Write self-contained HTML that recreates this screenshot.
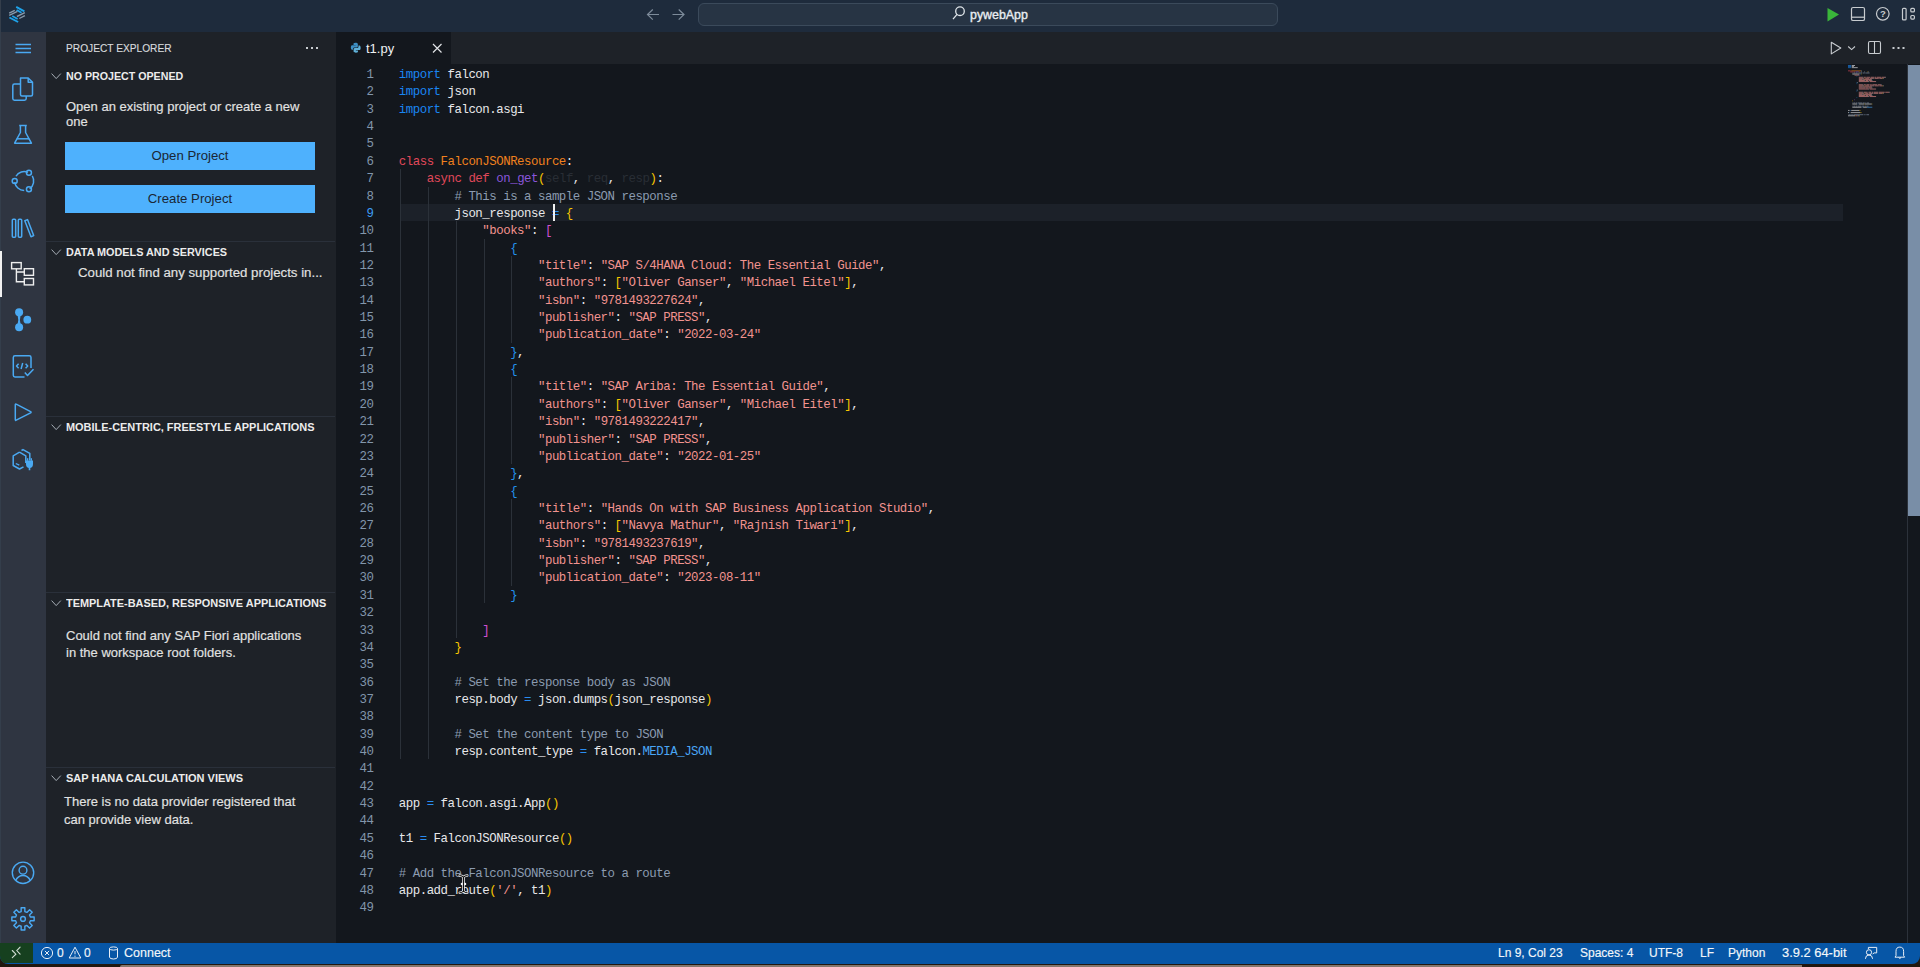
<!DOCTYPE html>
<html><head><meta charset="utf-8">
<style>
*{box-sizing:border-box}
html,body{margin:0;padding:0}
body{width:1920px;height:967px;overflow:hidden;position:relative;background:#22170f;font-family:"Liberation Sans",sans-serif;color:#e6e6e6}
.a{position:absolute}
#title{left:0;top:0;width:1920px;height:32px;background:#1e2b3c}
#act{left:0;top:32px;width:46px;height:911px;background:#2f3541;border-left:1px solid #3b424d}
#side{left:46px;top:32px;width:290px;height:911px;background:#1e2228}
#tabs{left:336px;top:32px;width:1584px;height:32px;background:#1e2228}
#editor{left:336px;top:64px;width:1584px;height:879px;background:#13171d;overflow:hidden}
#status{left:0;top:943px;width:1920px;height:21px;background:#0756a6;border-bottom-left-radius:8px;border-bottom-right-radius:8px;overflow:hidden}
#bottom{left:120px;top:965px;width:1682px;height:2px;background:#85776d;border-top-left-radius:6px}
svg{position:absolute;overflow:visible}
.ln{position:absolute;left:0;width:37.52px;text-align:right;font-family:"Liberation Mono",monospace;font-size:12.40px;letter-spacing:-0.477px;color:#8296ab;white-space:pre}
.cl{position:absolute;font-family:"Liberation Mono",monospace;font-size:12.40px;letter-spacing:-0.477px;white-space:pre}
.g{position:absolute;width:1px;background:#2b3139}
.hd{position:absolute;left:66px;font-weight:bold;font-size:11.4px;color:#ececec;white-space:nowrap;transform-origin:0 0}
.chev{position:absolute;left:51px}
.sep{position:absolute;left:46px;width:289px;height:1px;background:#2a303a}
.txt{position:absolute;font-size:13px;color:#e2e2e2;white-space:nowrap;line-height:17.3px;-webkit-text-stroke:0.15px #e2e2e2}
.btn{position:absolute;left:65px;width:250px;height:28px;background:#4eb1fd;color:#1a2634;font-size:13.2px;text-align:center;line-height:28px}
.st{position:absolute;top:0;height:20px;line-height:20px;font-size:12px;color:#f2f6fa;white-space:nowrap;-webkit-text-stroke:0.15px #f2f6fa}
.kw{color:#1a86f2}
.red{color:#e0485a}
.cls{color:#f0811e}
.fn{color:#8a56da}
.par{color:#f7c500}
.mag{color:#d050d0}
.brc{color:#2392ec}
.str{color:#f2938f}
.com{color:#8b9bb0}
.id{color:#e8e8ea}
.op{color:#2a8cf0}
.const{color:#4aa6f5}
.dim{color:#292e35}
.punc{color:#e8e8ea}
</style></head><body>
<div id="bottom" class="a"></div>
<div id="title" class="a"></div>
<div id="act" class="a"></div>
<div id="side" class="a"></div>
<div id="tabs" class="a"></div>
<div class="a" style="left:0;top:0;width:1920px;height:32px"><div class="a" style="left:0;top:0;width:1px;height:943px;background:#343e4b"></div><svg width="30" height="30" style="left:0;top:0"><g stroke-linecap="butt"><path d="M16.2 6.9 L24.4 11.4" stroke="#1ea3ea" stroke-width="1.9"/><path d="M16.6 10 L21.6 12.8" stroke="#1ea3ea" stroke-width="1.7"/><path d="M9.2 13.2 L14.8 10.3" stroke="#8799ab" stroke-width="1.4"/><path d="M9.2 15.3 L17.4 11.4" stroke="#8799ab" stroke-width="1.4"/><path d="M16.9 16.5 L24.9 12.6" stroke="#8799ab" stroke-width="1.4"/><path d="M19.3 18.5 L24.9 15.6" stroke="#8799ab" stroke-width="1.4"/><path d="M9.4 17.5 L18.1 22" stroke="#1ea3ea" stroke-width="1.9"/><path d="M12.3 16 L17.6 18.9" stroke="#1ea3ea" stroke-width="1.7"/></g></svg><svg width="40" height="32" style="left:640px;top:0"><g fill="none" stroke="#7d8b9a" stroke-width="1.2"><path d="M19 14.5 H7.5 M12.8 9.5 L7.5 14.5 L12.8 19.6"/><path d="M32.5 14.5 H44 M38.7 9.5 L44 14.5 L38.7 19.6"/></g></svg><div class="a" style="left:698px;top:3px;width:580px;height:23px;background:#273444;border:1px solid #3b4a5b;border-radius:6px"></div><svg width="16" height="16" style="left:950px;top:5px"><g fill="none" stroke="#dfe5ea" stroke-width="1.3"><circle cx="10" cy="6.2" r="4.3"/><path d="M7 9.4 L3 14.2"/></g></svg><div class="a" style="left:970px;top:7.5px;font-size:12.4px;color:#e9edf1;-webkit-text-stroke:0.35px #e9edf1">pywebApp</div><svg width="100" height="32" style="left:1820px;top:0"><path d="M7.5 8 L19 14.6 L7.5 21.5 Z" fill="#3ab53a"/><g fill="none" stroke="#c8ccd0" stroke-width="1.2"><rect x="31.5" y="7.5" width="13" height="13" rx="1.6"/><path d="M31.5 17.2 H44.5"/><circle cx="62.8" cy="13.8" r="6.3"/><rect x="82.5" y="8.3" width="3.6" height="11.6" rx="1"/><rect x="90.8" y="8.3" width="3.6" height="3.6" rx="1"/><rect x="90.8" y="15.5" width="3.6" height="3.6" rx="1"/></g><text x="62.8" y="17.4" font-size="9.5" font-weight="bold" fill="#c8ccd0" text-anchor="middle" font-family="Liberation Sans">?</text></svg></div>
<div class="a" style="left:336px;top:32px;width:115px;height:32px;background:#13171d"></div><svg width="14" height="14" style="left:350px;top:42px"><g transform="scale(0.82)"><path d="M6.8 1 C4.2 1 4.3 2.2 4.3 2.2 V3.6 H6.9 V4.1 H2.9 C2.9 4.1 1 3.9 1 6.8 C1 9.7 2.7 9.6 2.7 9.6 H3.7 V8.2 C3.7 8.2 3.6 6.6 5.3 6.6 H8 C8 6.6 9.6 6.6 9.6 5.1 V2.6 C9.6 2.6 9.8 1 6.8 1 Z" fill="#3d8fc4"/><path d="M7.2 13 C9.8 13 9.7 11.8 9.7 11.8 V10.4 H7.1 V9.9 H11.1 C11.1 9.9 13 10.1 13 7.2 C13 4.3 11.3 4.4 11.3 4.4 H10.3 V5.8 C10.3 5.8 10.4 7.4 8.7 7.4 H6 C6 7.4 4.4 7.4 4.4 8.9 V11.4 C4.4 11.4 4.2 13 7.2 13 Z" fill="#5fb0d8"/></g></svg><div class="a" style="left:366px;top:41px;font-size:13px;color:#eef0f2">t1.py</div><svg width="12" height="12" style="left:432px;top:43px"><path d="M1 1 L9.5 9.5 M9.5 1 L1 9.5" stroke="#e0e3e6" stroke-width="1.2"/></svg><svg width="90" height="32" style="left:1825px;top:32px"><g fill="none" stroke="#c8ccd0" stroke-width="1.1"><path d="M6.3 10.3 L15.8 16 L6.3 21.9 Z" stroke-linejoin="round"/><path d="M23.2 14.5 L26.6 17.6 L30 14.5"/><rect x="43.5" y="9.5" width="12" height="12" rx="1.4"/><path d="M49.5 9.5 V21.5"/></g><g fill="#c8ccd0"><rect x="67.5" y="15" width="2" height="2"/><rect x="72.5" y="15" width="2" height="2"/><rect x="77.5" y="15" width="2" height="2"/></g></svg>
<div class="a" style="left:0;top:251px;width:2px;height:46px;background:#f2f2f2"></div><svg width="46" height="911" style="left:0;top:32px"><g fill="none" stroke="#4aa9f2" stroke-width="1.5" stroke-linejoin="round"><path d="M15.5 12.5 H31 M15.5 16.5 H31 M15.5 20.5 H31" stroke-width="1.5"/><path d="M20.5 46 H28.2 L32.5 50.3 V62.5 Q32.5 64 31 64 H22 Q20.5 64 20.5 62.5 Z"/><path d="M28.2 46 V50.3 H32.5"/><path d="M20.5 52 H14.5 Q12.8 52 12.8 53.7 V66.5 Q12.8 68.2 14.5 68.2 H24.5 Q26.2 68.2 26.2 66.5 V64"/><path d="M19.2 93.5 H26.8 M20.4 93.5 V100.5 L14.6 111.2 H31.4 L25.6 100.5 V93.5"/><path d="M16.8 106.8 H29.2"/><path d="M15.97 144.25 A9.50 9.50 0 0 1 28.06 140.32 M32.26 143.97 A9.50 9.50 0 0 1 29.65 156.78 M24.20 158.50 A9.50 9.50 0 0 1 14.75 149.99"/><circle cx="28.95" cy="140.77" r="2.5"/><circle cx="14.70" cy="149.00" r="2.5"/><circle cx="28.95" cy="157.23" r="2.5"/><rect x="12.3" y="187.3" width="3.4" height="18" rx="1"/><rect x="18.3" y="187.3" width="3.4" height="18" rx="1"/><path d="M24.8 188.8 L27.5 187.6 L33.7 203.6 L31 204.8 Z"/></g><g fill="none" stroke="#eeeeee" stroke-width="1.4"><rect x="11.6" y="230.6" width="9.6" height="6.2"/><rect x="24.3" y="236.7" width="9.2" height="6.6"/><rect x="24.3" y="246.5" width="9.2" height="6.4"/><path d="M16.4 236.8 V249.7 H24.3 M16.4 240 H24.3"/></g><g fill="#4aa9f2"><circle cx="19.1" cy="280.2" r="4"/><circle cx="19.1" cy="295.3" r="4"/><circle cx="27.3" cy="287.7" r="3.9"/><path d="M17.4 282 Q19.1 287.7 17.4 293.5 H20.8 Q19.1 287.7 20.8 282 Z"/></g><g fill="none" stroke="#4aa9f2" stroke-width="1.5" stroke-linejoin="round"><path d="M24.5 345 H15 Q13.3 345 13.3 343.3 V325.5 Q13.3 323.8 15 323.8 H29.3 Q31 323.8 31 325.5 V336"/><path d="M24.8 340.6 L27.5 343.5 L33.5 337.2"/><path d="M18.6 331.8 L16.5 334 L18.6 336.2 M25.6 331.8 L27.7 334 L25.6 336.2 M22.7 331 L21.1 337"/><path d="M16.2 372.2 Q15.3 371.6 15.3 372.8 V387.6 Q15.3 388.8 16.2 388.2 L30.6 380.9 Q31.5 380.3 30.6 379.6 Z"/><path d="M19.5 420.2 L25.8 423.8 V431 M19.5 420.2 L13.2 423.8 V433.5 L19.5 437 L23.5 434.8"/><path d="M21.5 418.5 L23 417.6 L29.8 421.4 V428.5"/><path d="M15.8 431.5 L19.3 433.2" stroke-width="1.3"/></g><g fill="#4aa9f2"><path d="M26 428.6 H33 V432 Q33 435.5 30.3 436 V438.2 H28.7 V436 Q26 435.5 26 432 Z"/><rect x="27" y="426.2" width="1.3" height="2.6"/><rect x="30.7" y="426.2" width="1.3" height="2.6"/></g><g fill="none" stroke="#4aa9f2" stroke-width="1.4"><circle cx="23" cy="840.8" r="10.7"/><circle cx="23" cy="838.2" r="3.9"/><path d="M15.6 848.6 Q18 843.5 23 843.5 Q28 843.5 30.4 848.6"/></g><g fill="none" stroke="#4aa9f2" stroke-width="1.4" stroke-linejoin="round"><path d="M21.16 879.53 L21.13 875.75 L24.87 875.75 L24.84 879.53 L26.91 880.39 L29.56 877.70 L32.20 880.34 L29.51 882.99 L30.37 885.06 L34.15 885.03 L34.15 888.77 L30.37 888.74 L29.51 890.81 L32.20 893.46 L29.56 896.10 L26.91 893.41 L24.84 894.27 L24.87 898.05 L21.13 898.05 L21.16 894.27 L19.09 893.41 L16.44 896.10 L13.80 893.46 L16.49 890.81 L15.63 888.74 L11.85 888.77 L11.85 885.03 L15.63 885.06 L16.49 882.99 L13.80 880.34 L16.44 877.70 L19.09 880.39 Z"/><circle cx="23" cy="886.9" r="2.4"/></g></svg>
<div class="a" style="left:66px;top:40.55px;font-size:11.8px;color:#d8dadd;-webkit-text-stroke:0.15px #d8dadd;white-space:nowrap;transform-origin:0 0;transform:scaleX(0.8625)">PROJECT EXPLORER</div><svg width="16" height="4" style="left:306px;top:46px"><g fill="#c8ccd0"><rect x="0" y="1" width="2" height="2"/><rect x="5" y="1" width="2" height="2"/><rect x="10" y="1" width="2" height="2"/></g></svg><svg width="12" height="8" style="left:51px;top:73.3px"><path d="M0.6 0.6 L5.2 5.6 L9.8 0.6" fill="none" stroke="#a6adb5" stroke-width="1"/></svg><div class="hd" style="top:69.68px;transform:scaleX(0.9352)">NO PROJECT OPENED</div><div class="txt" style="left:66px;top:98.75px;line-height:15.5px">Open an existing project or create a new<br>one</div><div class="btn" style="top:142px">Open Project</div><div class="btn" style="top:185px">Create Project</div><div class="sep" style="top:241.3px"></div><svg width="12" height="8" style="left:51px;top:248.9px"><path d="M0.6 0.6 L5.2 5.6 L9.8 0.6" fill="none" stroke="#a6adb5" stroke-width="1"/></svg><div class="hd" style="top:246.18px;transform:scaleX(0.9510)">DATA MODELS AND SERVICES</div><div class="sep" style="top:416.0px"></div><svg width="12" height="8" style="left:51px;top:423.6px"><path d="M0.6 0.6 L5.2 5.6 L9.8 0.6" fill="none" stroke="#a6adb5" stroke-width="1"/></svg><div class="hd" style="top:420.88px;transform:scaleX(0.9601)">MOBILE-CENTRIC, FREESTYLE APPLICATIONS</div><div class="sep" style="top:592.1px"></div><svg width="12" height="8" style="left:51px;top:599.7px"><path d="M0.6 0.6 L5.2 5.6 L9.8 0.6" fill="none" stroke="#a6adb5" stroke-width="1"/></svg><div class="hd" style="top:596.98px;transform:scaleX(0.9595)">TEMPLATE-BASED, RESPONSIVE APPLICATIONS</div><div class="sep" style="top:767.1px"></div><svg width="12" height="8" style="left:51px;top:774.7px"><path d="M0.6 0.6 L5.2 5.6 L9.8 0.6" fill="none" stroke="#a6adb5" stroke-width="1"/></svg><div class="hd" style="top:771.98px;transform:scaleX(0.9656)">SAP HANA CALCULATION VIEWS</div><div class="txt" style="left:78px;top:263.80px;font-size:13.25px">Could not find any supported projects in...</div><div class="txt" style="left:66px;top:626.55px">Could not find any SAP Fiori applications<br>in the workspace root folders.</div><div class="txt" style="left:64px;top:793.25px">There is no data provider registered that<br>can provide view data.</div>
<div id="editor" class="a">
<div class="a" style="left:64.00px;top:139.88px;width:1443.00px;height:17.36px;background:#1c2129"></div>
<div class="g" style="left:64.00px;top:105.16px;height:590.24px"></div>
<div class="g" style="left:91.85px;top:122.52px;height:572.88px"></div>
<div class="g" style="left:119.70px;top:157.24px;height:416.64px"></div>
<div class="g" style="left:147.55px;top:174.60px;height:364.56px"></div>
<div class="g" style="left:175.40px;top:191.96px;height:86.80px"></div>
<div class="g" style="left:175.40px;top:313.48px;height:86.80px"></div>
<div class="g" style="left:175.40px;top:435.00px;height:86.80px"></div>
<div class="ln" style="top:3.00px;height:17.36px;line-height:17.36px;color:#8296ab">1</div>
<div class="cl" style="left:62.80px;top:3.00px;line-height:17.36px"><span class="kw">import</span><span class="id"> falcon</span></div>
<div class="ln" style="top:20.36px;height:17.36px;line-height:17.36px;color:#8296ab">2</div>
<div class="cl" style="left:62.80px;top:20.36px;line-height:17.36px"><span class="kw">import</span><span class="id"> json</span></div>
<div class="ln" style="top:37.72px;height:17.36px;line-height:17.36px;color:#8296ab">3</div>
<div class="cl" style="left:62.80px;top:37.72px;line-height:17.36px"><span class="kw">import</span><span class="id"> falcon.asgi</span></div>
<div class="ln" style="top:55.08px;height:17.36px;line-height:17.36px;color:#8296ab">4</div>
<div class="ln" style="top:72.44px;height:17.36px;line-height:17.36px;color:#8296ab">5</div>
<div class="ln" style="top:89.80px;height:17.36px;line-height:17.36px;color:#8296ab">6</div>
<div class="cl" style="left:62.80px;top:89.80px;line-height:17.36px"><span class="red">class</span><span class="id"> </span><span class="cls">FalconJSONResource</span><span class="punc">:</span></div>
<div class="ln" style="top:107.16px;height:17.36px;line-height:17.36px;color:#8296ab">7</div>
<div class="cl" style="left:62.80px;top:107.16px;line-height:17.36px">    <span class="red">async</span><span class="id"> </span><span class="red">def</span><span class="id"> </span><span class="fn">on_get</span><span class="par">(</span><span class="dim">self</span><span class="punc">, </span><span class="dim">req</span><span class="punc">, </span><span class="dim">resp</span><span class="par">)</span><span class="punc">:</span></div>
<div class="ln" style="top:124.52px;height:17.36px;line-height:17.36px;color:#8296ab">8</div>
<div class="cl" style="left:62.80px;top:124.52px;line-height:17.36px">        <span class="com"># This is a sample JSON response</span></div>
<div class="ln" style="top:141.88px;height:17.36px;line-height:17.36px;color:#3d9df5">9</div>
<div class="cl" style="left:62.80px;top:141.88px;line-height:17.36px">        <span class="id">json_response </span><span class="op">=</span><span class="id"> </span><span class="par">{</span></div>
<div class="ln" style="top:159.24px;height:17.36px;line-height:17.36px;color:#8296ab">10</div>
<div class="cl" style="left:62.80px;top:159.24px;line-height:17.36px">            <span class="str">&quot;books&quot;</span><span class="punc">: </span><span class="mag">[</span></div>
<div class="ln" style="top:176.60px;height:17.36px;line-height:17.36px;color:#8296ab">11</div>
<div class="cl" style="left:62.80px;top:176.60px;line-height:17.36px">                <span class="brc">{</span></div>
<div class="ln" style="top:193.96px;height:17.36px;line-height:17.36px;color:#8296ab">12</div>
<div class="cl" style="left:62.80px;top:193.96px;line-height:17.36px">                    <span class="str">&quot;title&quot;</span><span class="punc">: </span><span class="str">&quot;SAP S/4HANA Cloud: The Essential Guide&quot;</span><span class="punc">,</span></div>
<div class="ln" style="top:211.32px;height:17.36px;line-height:17.36px;color:#8296ab">13</div>
<div class="cl" style="left:62.80px;top:211.32px;line-height:17.36px">                    <span class="str">&quot;authors&quot;</span><span class="punc">: </span><span class="par">[</span><span class="str">&quot;Oliver Ganser&quot;</span><span class="punc">, </span><span class="str">&quot;Michael Eitel&quot;</span><span class="par">]</span><span class="punc">,</span></div>
<div class="ln" style="top:228.68px;height:17.36px;line-height:17.36px;color:#8296ab">14</div>
<div class="cl" style="left:62.80px;top:228.68px;line-height:17.36px">                    <span class="str">&quot;isbn&quot;</span><span class="punc">: </span><span class="str">&quot;9781493227624&quot;</span><span class="punc">,</span></div>
<div class="ln" style="top:246.04px;height:17.36px;line-height:17.36px;color:#8296ab">15</div>
<div class="cl" style="left:62.80px;top:246.04px;line-height:17.36px">                    <span class="str">&quot;publisher&quot;</span><span class="punc">: </span><span class="str">&quot;SAP PRESS&quot;</span><span class="punc">,</span></div>
<div class="ln" style="top:263.40px;height:17.36px;line-height:17.36px;color:#8296ab">16</div>
<div class="cl" style="left:62.80px;top:263.40px;line-height:17.36px">                    <span class="str">&quot;publication_date&quot;</span><span class="punc">: </span><span class="str">&quot;2022-03-24&quot;</span></div>
<div class="ln" style="top:280.76px;height:17.36px;line-height:17.36px;color:#8296ab">17</div>
<div class="cl" style="left:62.80px;top:280.76px;line-height:17.36px">                <span class="brc">}</span><span class="punc">,</span></div>
<div class="ln" style="top:298.12px;height:17.36px;line-height:17.36px;color:#8296ab">18</div>
<div class="cl" style="left:62.80px;top:298.12px;line-height:17.36px">                <span class="brc">{</span></div>
<div class="ln" style="top:315.48px;height:17.36px;line-height:17.36px;color:#8296ab">19</div>
<div class="cl" style="left:62.80px;top:315.48px;line-height:17.36px">                    <span class="str">&quot;title&quot;</span><span class="punc">: </span><span class="str">&quot;SAP Ariba: The Essential Guide&quot;</span><span class="punc">,</span></div>
<div class="ln" style="top:332.84px;height:17.36px;line-height:17.36px;color:#8296ab">20</div>
<div class="cl" style="left:62.80px;top:332.84px;line-height:17.36px">                    <span class="str">&quot;authors&quot;</span><span class="punc">: </span><span class="par">[</span><span class="str">&quot;Oliver Ganser&quot;</span><span class="punc">, </span><span class="str">&quot;Michael Eitel&quot;</span><span class="par">]</span><span class="punc">,</span></div>
<div class="ln" style="top:350.20px;height:17.36px;line-height:17.36px;color:#8296ab">21</div>
<div class="cl" style="left:62.80px;top:350.20px;line-height:17.36px">                    <span class="str">&quot;isbn&quot;</span><span class="punc">: </span><span class="str">&quot;9781493222417&quot;</span><span class="punc">,</span></div>
<div class="ln" style="top:367.56px;height:17.36px;line-height:17.36px;color:#8296ab">22</div>
<div class="cl" style="left:62.80px;top:367.56px;line-height:17.36px">                    <span class="str">&quot;publisher&quot;</span><span class="punc">: </span><span class="str">&quot;SAP PRESS&quot;</span><span class="punc">,</span></div>
<div class="ln" style="top:384.92px;height:17.36px;line-height:17.36px;color:#8296ab">23</div>
<div class="cl" style="left:62.80px;top:384.92px;line-height:17.36px">                    <span class="str">&quot;publication_date&quot;</span><span class="punc">: </span><span class="str">&quot;2022-01-25&quot;</span></div>
<div class="ln" style="top:402.28px;height:17.36px;line-height:17.36px;color:#8296ab">24</div>
<div class="cl" style="left:62.80px;top:402.28px;line-height:17.36px">                <span class="brc">}</span><span class="punc">,</span></div>
<div class="ln" style="top:419.64px;height:17.36px;line-height:17.36px;color:#8296ab">25</div>
<div class="cl" style="left:62.80px;top:419.64px;line-height:17.36px">                <span class="brc">{</span></div>
<div class="ln" style="top:437.00px;height:17.36px;line-height:17.36px;color:#8296ab">26</div>
<div class="cl" style="left:62.80px;top:437.00px;line-height:17.36px">                    <span class="str">&quot;title&quot;</span><span class="punc">: </span><span class="str">&quot;Hands On with SAP Business Application Studio&quot;</span><span class="punc">,</span></div>
<div class="ln" style="top:454.36px;height:17.36px;line-height:17.36px;color:#8296ab">27</div>
<div class="cl" style="left:62.80px;top:454.36px;line-height:17.36px">                    <span class="str">&quot;authors&quot;</span><span class="punc">: </span><span class="par">[</span><span class="str">&quot;Navya Mathur&quot;</span><span class="punc">, </span><span class="str">&quot;Rajnish Tiwari&quot;</span><span class="par">]</span><span class="punc">,</span></div>
<div class="ln" style="top:471.72px;height:17.36px;line-height:17.36px;color:#8296ab">28</div>
<div class="cl" style="left:62.80px;top:471.72px;line-height:17.36px">                    <span class="str">&quot;isbn&quot;</span><span class="punc">: </span><span class="str">&quot;9781493237619&quot;</span><span class="punc">,</span></div>
<div class="ln" style="top:489.08px;height:17.36px;line-height:17.36px;color:#8296ab">29</div>
<div class="cl" style="left:62.80px;top:489.08px;line-height:17.36px">                    <span class="str">&quot;publisher&quot;</span><span class="punc">: </span><span class="str">&quot;SAP PRESS&quot;</span><span class="punc">,</span></div>
<div class="ln" style="top:506.44px;height:17.36px;line-height:17.36px;color:#8296ab">30</div>
<div class="cl" style="left:62.80px;top:506.44px;line-height:17.36px">                    <span class="str">&quot;publication_date&quot;</span><span class="punc">: </span><span class="str">&quot;2023-08-11&quot;</span></div>
<div class="ln" style="top:523.80px;height:17.36px;line-height:17.36px;color:#8296ab">31</div>
<div class="cl" style="left:62.80px;top:523.80px;line-height:17.36px">                <span class="brc">}</span></div>
<div class="ln" style="top:541.16px;height:17.36px;line-height:17.36px;color:#8296ab">32</div>
<div class="ln" style="top:558.52px;height:17.36px;line-height:17.36px;color:#8296ab">33</div>
<div class="cl" style="left:62.80px;top:558.52px;line-height:17.36px">            <span class="mag">]</span></div>
<div class="ln" style="top:575.88px;height:17.36px;line-height:17.36px;color:#8296ab">34</div>
<div class="cl" style="left:62.80px;top:575.88px;line-height:17.36px">        <span class="par">}</span></div>
<div class="ln" style="top:593.24px;height:17.36px;line-height:17.36px;color:#8296ab">35</div>
<div class="ln" style="top:610.60px;height:17.36px;line-height:17.36px;color:#8296ab">36</div>
<div class="cl" style="left:62.80px;top:610.60px;line-height:17.36px">        <span class="com"># Set the response body as JSON</span></div>
<div class="ln" style="top:627.96px;height:17.36px;line-height:17.36px;color:#8296ab">37</div>
<div class="cl" style="left:62.80px;top:627.96px;line-height:17.36px">        <span class="id">resp.body </span><span class="op">=</span><span class="id"> json.dumps</span><span class="par">(</span><span class="id">json_response</span><span class="par">)</span></div>
<div class="ln" style="top:645.32px;height:17.36px;line-height:17.36px;color:#8296ab">38</div>
<div class="ln" style="top:662.68px;height:17.36px;line-height:17.36px;color:#8296ab">39</div>
<div class="cl" style="left:62.80px;top:662.68px;line-height:17.36px">        <span class="com"># Set the content type to JSON</span></div>
<div class="ln" style="top:680.04px;height:17.36px;line-height:17.36px;color:#8296ab">40</div>
<div class="cl" style="left:62.80px;top:680.04px;line-height:17.36px">        <span class="id">resp.content_type </span><span class="op">=</span><span class="id"> falcon.</span><span class="const">MEDIA_JSON</span></div>
<div class="ln" style="top:697.40px;height:17.36px;line-height:17.36px;color:#8296ab">41</div>
<div class="ln" style="top:714.76px;height:17.36px;line-height:17.36px;color:#8296ab">42</div>
<div class="ln" style="top:732.12px;height:17.36px;line-height:17.36px;color:#8296ab">43</div>
<div class="cl" style="left:62.80px;top:732.12px;line-height:17.36px"><span class="id">app </span><span class="op">=</span><span class="id"> falcon.asgi.App</span><span class="par">()</span></div>
<div class="ln" style="top:749.48px;height:17.36px;line-height:17.36px;color:#8296ab">44</div>
<div class="ln" style="top:766.84px;height:17.36px;line-height:17.36px;color:#8296ab">45</div>
<div class="cl" style="left:62.80px;top:766.84px;line-height:17.36px"><span class="id">t1 </span><span class="op">=</span><span class="id"> FalconJSONResource</span><span class="par">()</span></div>
<div class="ln" style="top:784.20px;height:17.36px;line-height:17.36px;color:#8296ab">46</div>
<div class="ln" style="top:801.56px;height:17.36px;line-height:17.36px;color:#8296ab">47</div>
<div class="cl" style="left:62.80px;top:801.56px;line-height:17.36px"><span class="com"># Add the FalconJSONResource to a route</span></div>
<div class="ln" style="top:818.92px;height:17.36px;line-height:17.36px;color:#8296ab">48</div>
<div class="cl" style="left:62.80px;top:818.92px;line-height:17.36px"><span class="id">app.add_route</span><span class="par">(</span><span class="str">&#x27;/&#x27;</span><span class="punc">, </span><span class="id">t1</span><span class="par">)</span></div>
<div class="ln" style="top:836.28px;height:17.36px;line-height:17.36px;color:#8296ab">49</div>
<svg width="60" height="60" style="left:0;top:0;opacity:0.62"><rect x="1512.00" y="1.00" width="3.24" height="1" fill="#1a86f2"/><rect x="1515.78" y="1.00" width="3.24" height="1" fill="#e8e8ea"/><rect x="1512.00" y="2.07" width="3.24" height="1" fill="#1a86f2"/><rect x="1515.78" y="2.07" width="2.16" height="1" fill="#e8e8ea"/><rect x="1512.00" y="3.14" width="3.24" height="1" fill="#1a86f2"/><rect x="1515.78" y="3.14" width="5.94" height="1" fill="#e8e8ea"/><rect x="1512.00" y="6.35" width="2.70" height="1" fill="#e0485a"/><rect x="1515.24" y="6.35" width="9.72" height="1" fill="#f0811e"/><rect x="1524.96" y="6.35" width="0.54" height="1" fill="#e8e8ea"/><rect x="1514.16" y="7.42" width="2.70" height="1" fill="#e0485a"/><rect x="1517.40" y="7.42" width="1.62" height="1" fill="#e0485a"/><rect x="1519.56" y="7.42" width="3.24" height="1" fill="#8a56da"/><rect x="1522.80" y="7.42" width="0.54" height="1" fill="#f7c500"/><rect x="1525.50" y="7.42" width="0.54" height="1" fill="#e8e8ea"/><rect x="1528.20" y="7.42" width="0.54" height="1" fill="#e8e8ea"/><rect x="1531.44" y="7.42" width="0.54" height="1" fill="#f7c500"/><rect x="1531.98" y="7.42" width="0.54" height="1" fill="#e8e8ea"/><rect x="1516.32" y="8.49" width="0.54" height="1" fill="#8b9bb0"/><rect x="1517.40" y="8.49" width="2.16" height="1" fill="#8b9bb0"/><rect x="1520.10" y="8.49" width="1.08" height="1" fill="#8b9bb0"/><rect x="1521.72" y="8.49" width="0.54" height="1" fill="#8b9bb0"/><rect x="1522.80" y="8.49" width="3.24" height="1" fill="#8b9bb0"/><rect x="1526.58" y="8.49" width="2.16" height="1" fill="#8b9bb0"/><rect x="1529.28" y="8.49" width="4.32" height="1" fill="#8b9bb0"/><rect x="1516.32" y="9.56" width="7.02" height="1" fill="#e8e8ea"/><rect x="1523.88" y="9.56" width="0.54" height="1" fill="#2a8cf0"/><rect x="1524.96" y="9.56" width="0.54" height="1" fill="#f7c500"/><rect x="1518.48" y="10.63" width="3.78" height="1" fill="#f2938f"/><rect x="1522.26" y="10.63" width="0.54" height="1" fill="#e8e8ea"/><rect x="1523.34" y="10.63" width="0.54" height="1" fill="#d050d0"/><rect x="1520.64" y="11.70" width="0.54" height="1" fill="#2392ec"/><rect x="1522.80" y="12.77" width="3.78" height="1" fill="#f2938f"/><rect x="1526.58" y="12.77" width="0.54" height="1" fill="#e8e8ea"/><rect x="1527.66" y="12.77" width="2.16" height="1" fill="#f2938f"/><rect x="1530.36" y="12.77" width="3.78" height="1" fill="#f2938f"/><rect x="1534.68" y="12.77" width="3.24" height="1" fill="#f2938f"/><rect x="1538.46" y="12.77" width="1.62" height="1" fill="#f2938f"/><rect x="1540.62" y="12.77" width="4.86" height="1" fill="#f2938f"/><rect x="1546.02" y="12.77" width="3.24" height="1" fill="#f2938f"/><rect x="1549.26" y="12.77" width="0.54" height="1" fill="#e8e8ea"/><rect x="1522.80" y="13.84" width="4.86" height="1" fill="#f2938f"/><rect x="1527.66" y="13.84" width="0.54" height="1" fill="#e8e8ea"/><rect x="1528.74" y="13.84" width="0.54" height="1" fill="#f7c500"/><rect x="1529.28" y="13.84" width="3.78" height="1" fill="#f2938f"/><rect x="1533.60" y="13.84" width="3.78" height="1" fill="#f2938f"/><rect x="1537.38" y="13.84" width="0.54" height="1" fill="#e8e8ea"/><rect x="1538.46" y="13.84" width="4.32" height="1" fill="#f2938f"/><rect x="1543.32" y="13.84" width="3.24" height="1" fill="#f2938f"/><rect x="1546.56" y="13.84" width="0.54" height="1" fill="#f7c500"/><rect x="1547.10" y="13.84" width="0.54" height="1" fill="#e8e8ea"/><rect x="1522.80" y="14.91" width="3.24" height="1" fill="#f2938f"/><rect x="1526.04" y="14.91" width="0.54" height="1" fill="#e8e8ea"/><rect x="1527.12" y="14.91" width="8.10" height="1" fill="#f2938f"/><rect x="1535.22" y="14.91" width="0.54" height="1" fill="#e8e8ea"/><rect x="1522.80" y="15.98" width="5.94" height="1" fill="#f2938f"/><rect x="1528.74" y="15.98" width="0.54" height="1" fill="#e8e8ea"/><rect x="1529.82" y="15.98" width="2.16" height="1" fill="#f2938f"/><rect x="1532.52" y="15.98" width="3.24" height="1" fill="#f2938f"/><rect x="1535.76" y="15.98" width="0.54" height="1" fill="#e8e8ea"/><rect x="1522.80" y="17.05" width="9.72" height="1" fill="#f2938f"/><rect x="1532.52" y="17.05" width="0.54" height="1" fill="#e8e8ea"/><rect x="1533.60" y="17.05" width="6.48" height="1" fill="#f2938f"/><rect x="1520.64" y="18.12" width="0.54" height="1" fill="#2392ec"/><rect x="1521.18" y="18.12" width="0.54" height="1" fill="#e8e8ea"/><rect x="1520.64" y="19.19" width="0.54" height="1" fill="#2392ec"/><rect x="1522.80" y="20.26" width="3.78" height="1" fill="#f2938f"/><rect x="1526.58" y="20.26" width="0.54" height="1" fill="#e8e8ea"/><rect x="1527.66" y="20.26" width="2.16" height="1" fill="#f2938f"/><rect x="1530.36" y="20.26" width="3.24" height="1" fill="#f2938f"/><rect x="1534.14" y="20.26" width="1.62" height="1" fill="#f2938f"/><rect x="1536.30" y="20.26" width="4.86" height="1" fill="#f2938f"/><rect x="1541.70" y="20.26" width="3.24" height="1" fill="#f2938f"/><rect x="1544.94" y="20.26" width="0.54" height="1" fill="#e8e8ea"/><rect x="1522.80" y="21.33" width="4.86" height="1" fill="#f2938f"/><rect x="1527.66" y="21.33" width="0.54" height="1" fill="#e8e8ea"/><rect x="1528.74" y="21.33" width="0.54" height="1" fill="#f7c500"/><rect x="1529.28" y="21.33" width="3.78" height="1" fill="#f2938f"/><rect x="1533.60" y="21.33" width="3.78" height="1" fill="#f2938f"/><rect x="1537.38" y="21.33" width="0.54" height="1" fill="#e8e8ea"/><rect x="1538.46" y="21.33" width="4.32" height="1" fill="#f2938f"/><rect x="1543.32" y="21.33" width="3.24" height="1" fill="#f2938f"/><rect x="1546.56" y="21.33" width="0.54" height="1" fill="#f7c500"/><rect x="1547.10" y="21.33" width="0.54" height="1" fill="#e8e8ea"/><rect x="1522.80" y="22.40" width="3.24" height="1" fill="#f2938f"/><rect x="1526.04" y="22.40" width="0.54" height="1" fill="#e8e8ea"/><rect x="1527.12" y="22.40" width="8.10" height="1" fill="#f2938f"/><rect x="1535.22" y="22.40" width="0.54" height="1" fill="#e8e8ea"/><rect x="1522.80" y="23.47" width="5.94" height="1" fill="#f2938f"/><rect x="1528.74" y="23.47" width="0.54" height="1" fill="#e8e8ea"/><rect x="1529.82" y="23.47" width="2.16" height="1" fill="#f2938f"/><rect x="1532.52" y="23.47" width="3.24" height="1" fill="#f2938f"/><rect x="1535.76" y="23.47" width="0.54" height="1" fill="#e8e8ea"/><rect x="1522.80" y="24.54" width="9.72" height="1" fill="#f2938f"/><rect x="1532.52" y="24.54" width="0.54" height="1" fill="#e8e8ea"/><rect x="1533.60" y="24.54" width="6.48" height="1" fill="#f2938f"/><rect x="1520.64" y="25.61" width="0.54" height="1" fill="#2392ec"/><rect x="1521.18" y="25.61" width="0.54" height="1" fill="#e8e8ea"/><rect x="1520.64" y="26.68" width="0.54" height="1" fill="#2392ec"/><rect x="1522.80" y="27.75" width="3.78" height="1" fill="#f2938f"/><rect x="1526.58" y="27.75" width="0.54" height="1" fill="#e8e8ea"/><rect x="1527.66" y="27.75" width="3.24" height="1" fill="#f2938f"/><rect x="1531.44" y="27.75" width="1.08" height="1" fill="#f2938f"/><rect x="1533.06" y="27.75" width="2.16" height="1" fill="#f2938f"/><rect x="1535.76" y="27.75" width="1.62" height="1" fill="#f2938f"/><rect x="1537.92" y="27.75" width="4.32" height="1" fill="#f2938f"/><rect x="1542.78" y="27.75" width="5.94" height="1" fill="#f2938f"/><rect x="1549.26" y="27.75" width="3.78" height="1" fill="#f2938f"/><rect x="1553.04" y="27.75" width="0.54" height="1" fill="#e8e8ea"/><rect x="1522.80" y="28.82" width="4.86" height="1" fill="#f2938f"/><rect x="1527.66" y="28.82" width="0.54" height="1" fill="#e8e8ea"/><rect x="1528.74" y="28.82" width="0.54" height="1" fill="#f7c500"/><rect x="1529.28" y="28.82" width="3.24" height="1" fill="#f2938f"/><rect x="1533.06" y="28.82" width="3.78" height="1" fill="#f2938f"/><rect x="1536.84" y="28.82" width="0.54" height="1" fill="#e8e8ea"/><rect x="1537.92" y="28.82" width="4.32" height="1" fill="#f2938f"/><rect x="1542.78" y="28.82" width="3.78" height="1" fill="#f2938f"/><rect x="1546.56" y="28.82" width="0.54" height="1" fill="#f7c500"/><rect x="1547.10" y="28.82" width="0.54" height="1" fill="#e8e8ea"/><rect x="1522.80" y="29.89" width="3.24" height="1" fill="#f2938f"/><rect x="1526.04" y="29.89" width="0.54" height="1" fill="#e8e8ea"/><rect x="1527.12" y="29.89" width="8.10" height="1" fill="#f2938f"/><rect x="1535.22" y="29.89" width="0.54" height="1" fill="#e8e8ea"/><rect x="1522.80" y="30.96" width="5.94" height="1" fill="#f2938f"/><rect x="1528.74" y="30.96" width="0.54" height="1" fill="#e8e8ea"/><rect x="1529.82" y="30.96" width="2.16" height="1" fill="#f2938f"/><rect x="1532.52" y="30.96" width="3.24" height="1" fill="#f2938f"/><rect x="1535.76" y="30.96" width="0.54" height="1" fill="#e8e8ea"/><rect x="1522.80" y="32.03" width="9.72" height="1" fill="#f2938f"/><rect x="1532.52" y="32.03" width="0.54" height="1" fill="#e8e8ea"/><rect x="1533.60" y="32.03" width="6.48" height="1" fill="#f2938f"/><rect x="1520.64" y="33.10" width="0.54" height="1" fill="#2392ec"/><rect x="1518.48" y="35.24" width="0.54" height="1" fill="#d050d0"/><rect x="1516.32" y="36.31" width="0.54" height="1" fill="#f7c500"/><rect x="1516.32" y="38.45" width="0.54" height="1" fill="#8b9bb0"/><rect x="1517.40" y="38.45" width="1.62" height="1" fill="#8b9bb0"/><rect x="1519.56" y="38.45" width="1.62" height="1" fill="#8b9bb0"/><rect x="1521.72" y="38.45" width="4.32" height="1" fill="#8b9bb0"/><rect x="1526.58" y="38.45" width="2.16" height="1" fill="#8b9bb0"/><rect x="1529.28" y="38.45" width="1.08" height="1" fill="#8b9bb0"/><rect x="1530.90" y="38.45" width="2.16" height="1" fill="#8b9bb0"/><rect x="1516.32" y="39.52" width="4.86" height="1" fill="#e8e8ea"/><rect x="1521.72" y="39.52" width="0.54" height="1" fill="#2a8cf0"/><rect x="1522.80" y="39.52" width="5.40" height="1" fill="#e8e8ea"/><rect x="1528.20" y="39.52" width="0.54" height="1" fill="#f7c500"/><rect x="1528.74" y="39.52" width="7.02" height="1" fill="#e8e8ea"/><rect x="1535.76" y="39.52" width="0.54" height="1" fill="#f7c500"/><rect x="1516.32" y="41.66" width="0.54" height="1" fill="#8b9bb0"/><rect x="1517.40" y="41.66" width="1.62" height="1" fill="#8b9bb0"/><rect x="1519.56" y="41.66" width="1.62" height="1" fill="#8b9bb0"/><rect x="1521.72" y="41.66" width="3.78" height="1" fill="#8b9bb0"/><rect x="1526.04" y="41.66" width="2.16" height="1" fill="#8b9bb0"/><rect x="1528.74" y="41.66" width="1.08" height="1" fill="#8b9bb0"/><rect x="1530.36" y="41.66" width="2.16" height="1" fill="#8b9bb0"/><rect x="1516.32" y="42.73" width="9.18" height="1" fill="#e8e8ea"/><rect x="1526.04" y="42.73" width="0.54" height="1" fill="#2a8cf0"/><rect x="1527.12" y="42.73" width="3.78" height="1" fill="#e8e8ea"/><rect x="1530.90" y="42.73" width="5.40" height="1" fill="#4aa6f5"/><rect x="1512.00" y="45.94" width="1.62" height="1" fill="#e8e8ea"/><rect x="1514.16" y="45.94" width="0.54" height="1" fill="#2a8cf0"/><rect x="1515.24" y="45.94" width="8.10" height="1" fill="#e8e8ea"/><rect x="1523.34" y="45.94" width="1.08" height="1" fill="#f7c500"/><rect x="1512.00" y="48.08" width="1.08" height="1" fill="#e8e8ea"/><rect x="1513.62" y="48.08" width="0.54" height="1" fill="#2a8cf0"/><rect x="1514.70" y="48.08" width="9.72" height="1" fill="#e8e8ea"/><rect x="1524.42" y="48.08" width="1.08" height="1" fill="#f7c500"/><rect x="1512.00" y="50.22" width="0.54" height="1" fill="#8b9bb0"/><rect x="1513.08" y="50.22" width="1.62" height="1" fill="#8b9bb0"/><rect x="1515.24" y="50.22" width="1.62" height="1" fill="#8b9bb0"/><rect x="1517.40" y="50.22" width="9.72" height="1" fill="#8b9bb0"/><rect x="1527.66" y="50.22" width="1.08" height="1" fill="#8b9bb0"/><rect x="1529.28" y="50.22" width="0.54" height="1" fill="#8b9bb0"/><rect x="1530.36" y="50.22" width="2.70" height="1" fill="#8b9bb0"/><rect x="1512.00" y="51.29" width="7.02" height="1" fill="#e8e8ea"/><rect x="1519.02" y="51.29" width="0.54" height="1" fill="#f7c500"/><rect x="1519.56" y="51.29" width="1.62" height="1" fill="#f2938f"/><rect x="1521.18" y="51.29" width="0.54" height="1" fill="#e8e8ea"/><rect x="1522.26" y="51.29" width="1.08" height="1" fill="#e8e8ea"/><rect x="1523.34" y="51.29" width="0.54" height="1" fill="#f7c500"/></svg>
<div class="a" style="left:217.00px;top:139.88px;width:2px;height:17.36px;background:#f0f0f0"></div>
<svg width="14" height="22" style="left:120.7px;top:809.5px"><g fill="none" stroke-linecap="round"><path d="M2.8 1.5 Q5 1.5 6.5 3.2 Q8 1.5 10.2 1.5 M6.5 3.2 V17 M2.8 18.7 Q5 18.7 6.5 17 Q8 18.7 10.2 18.7 M5 10 H8" stroke="#f2f2f2" stroke-width="2.6"/><path d="M2.8 1.5 Q5 1.5 6.5 3.2 Q8 1.5 10.2 1.5 M6.5 3.2 V17 M2.8 18.7 Q5 18.7 6.5 17 Q8 18.7 10.2 18.7" stroke="#111" stroke-width="1.1"/></g></svg>
<div class="a" style="left:1571px;top:0;width:1px;height:879px;background:#2c323b"></div>
<div class="a" style="left:1572px;top:1px;width:12px;height:451px;background:#798ea7"></div>
</div>
<div id="status" class="a"><div class="a" style="left:0;top:0;width:33px;height:20px;background:#16401f"></div><svg width="20" height="20" style="left:8px;top:0"><path d="M4.3 7.5 L7.9 11.2 L4.3 14.7 M12.1 4.1 L8.8 7.6 L12.1 11.2" fill="none" stroke="#d0dcd2" stroke-width="1.1" stroke-linecap="round"/></svg><svg width="60" height="20" style="left:40px;top:0"><g fill="none" stroke="#e8eef6" stroke-width="1"><circle cx="7" cy="10" r="5.6"/><path d="M4.9 7.9 L9.1 12.1 M9.1 7.9 L4.9 12.1"/><path d="M35 4.2 L40.8 15 H29.2 Z"/><path d="M35 8 V11.3"/></g><circle cx="35" cy="13.2" r="0.6" fill="#e8eef6"/></svg><div class="st" style="left:57px">0</div><div class="st" style="left:84px">0</div><svg width="12" height="20" style="left:108px;top:0"><g fill="none" stroke="#e8eef6" stroke-width="1"><path d="M1.5 5.5 V14 Q1.5 16 5.5 16 Q9.5 16 9.5 14 V5.5"/><ellipse cx="5.5" cy="5.5" rx="4" ry="1.6"/></g></svg><div class="st" style="left:124px;font-size:12.5px">Connect</div><div class="st" style="left:1498px;">Ln 9, Col 23</div><div class="st" style="left:1580px;">Spaces: 4</div><div class="st" style="left:1649px;">UTF-8</div><div class="st" style="left:1700px;">LF</div><div class="st" style="left:1728px;">Python</div><div class="st" style="left:1782px;font-size:12.9px">3.9.2 64-bit</div><svg width="60" height="20" style="left:1860px;top:0"><g fill="none" stroke="#e8eef6" stroke-width="1"><circle cx="9" cy="9.3" r="2.6"/><path d="M5.4 15.8 Q5.6 12 9 12 Q12.4 12 12.6 15.8"/><path d="M8.4 6 V4.4 H16.7 V9.9 H14.2 L12.6 11"/><path d="M35 14.2 H44.6 L43.6 12.6 V8.3 Q43.6 4.1 39.8 4.1 Q36 4.1 36 8.3 V12.6 Z"/><path d="M38.6 14.6 Q39.8 16.3 41 14.6"/></g></svg></div>
</body></html>
